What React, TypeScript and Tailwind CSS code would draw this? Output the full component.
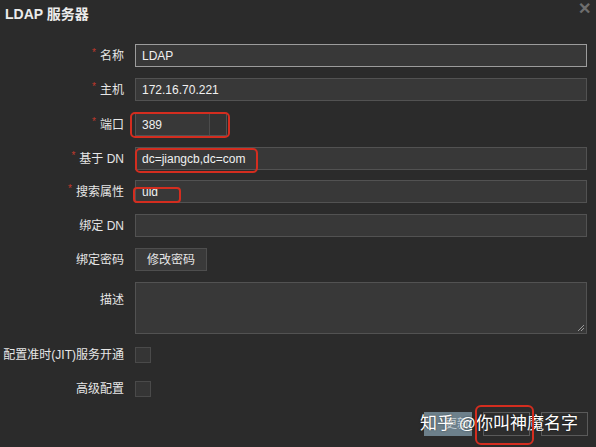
import React from "react";

const font = { fontFamily: '"Liberation Sans", Arial, "Noto Sans CJK SC", sans-serif' };

function Label({ text, required }: { text: string; required?: boolean }) {
  return (
    <div className="w-[124px] shrink-0 flex items-center justify-end text-[12px] text-[#e6e6e6]">
      {required && <span className="text-[#c0392b] text-[10px] mr-[4px] -mt-[6px]">*</span>}
      <span>{text}</span>
    </div>
  );
}

function Input({ value, focused }: { value?: string; focused?: boolean }) {
  return (
    <div
      className={`flex-1 mr-[9px] h-[23px] bg-[#383838] border ${
        focused ? "border-[#9c9c9c]" : "border-[#525252]"
      } flex items-center pl-[6px] text-[12px] text-[#f0f0f0]`}
    >
      {value}
    </div>
  );
}

function Row({ children }: { children: React.ReactNode }) {
  return <div className="flex h-[23px] gap-[11px]">{children}</div>;
}

export default function App() {
  return (
    <div className="relative w-[596px] h-[447px] bg-[#2b2b2b] overflow-hidden" style={font}>
      <div className="absolute right-[5px] top-[-3px] text-[#6e6e6e] text-[16px] font-bold">✕</div>
      <div className="pl-[5px] pt-[5px] h-[44px] text-[14px] font-bold text-[#ececec] leading-[18px]">
        LDAP 服务器
      </div>
      <div className="flex flex-col">
        <Row>
          <Label text="名称" required />
          <Input value="LDAP" focused />
        </Row>
        <div className="h-[11px]" />
        <Row>
          <Label text="主机" required />
          <Input value="172.16.70.221" />
        </Row>
        <div className="h-[12px]" />
        <Row>
          <Label text="端口" required />
          <div className="w-[92px] h-[23px] bg-[#383838] border border-[#525252] flex">
            <div className="w-[74px] border-r border-[#4c4c4c] flex items-center pl-[6px] text-[12px] text-[#f0f0f0]">
              389
            </div>
            <div className="flex-1 bg-[#333333]" />
          </div>
        </Row>
        <div className="h-[11px]" />
        <Row>
          <Label text="基于 DN" required />
          <Input value="dc=jiangcb,dc=com" />
        </Row>
        <div className="h-[10px]" />
        <Row>
          <Label text="搜索属性" required />
          <Input value="uid" />
        </Row>
        <div className="h-[11px]" />
        <Row>
          <Label text="绑定 DN" />
          <Input />
        </Row>
        <div className="h-[11px]" />
        <Row>
          <Label text="绑定密码" />
          <div className="w-[72px] h-[23px] bg-[#3a3a3a] border border-[#4e4e4e] flex items-center justify-center text-[12px] text-[#e6e6e6]">
            修改密码
          </div>
        </Row>
        <div className="h-[11px]" />
        <div className="flex gap-[11px] h-[52px]">
          <div className="w-[124px] shrink-0 flex justify-end pt-[9px] text-[12px] text-[#e6e6e6]">描述</div>
          <div className="relative flex-1 mr-[9px] bg-[#383838] border border-[#525252]">
            <svg className="absolute right-[1px] bottom-[1px]" width="9" height="9" viewBox="0 0 9 9">
              <path d="M8 2 L2 8 M8 5 L5 8" stroke="#9a9a9a" strokeWidth="1" />
            </svg>
          </div>
        </div>
        <div className="h-[13px]" />
        <div className="flex gap-[11px] h-[16px]">
          <div className="w-[124px] shrink-0 flex items-center justify-end text-[12px] text-[#e6e6e6] whitespace-nowrap">
            配置准时(JIT)服务开通
          </div>
          <div className="w-[16px] h-[16px] bg-[#353535] border border-[#4a4a4a]" />
        </div>
        <div className="h-[18px]" />
        <div className="flex gap-[11px] h-[16px]">
          <div className="w-[124px] shrink-0 flex items-center justify-end text-[12px] text-[#e6e6e6]">高级配置</div>
          <div className="w-[16px] h-[16px] bg-[#353535] border border-[#4a4a4a]" />
        </div>
      </div>

      <div className="absolute left-[424px] top-[412px] flex gap-[11px]">
        <div className="w-[48px] h-[24px] bg-[#6d808b] flex items-center justify-end pr-[3px] text-[12px] text-[#c5d0d6]">
          更新
        </div>
        <div className="w-[47px] h-[24px] border border-[#5a5a5a] bg-[#2e2e2e]" />
        <div className="w-[47px] h-[24px] border border-[#5a5a5a] bg-[#2e2e2e]" />
      </div>

      <div
        className="absolute left-[420px] top-[411px] text-[17px] text-white leading-[26px] whitespace-nowrap"
        style={{ textShadow: "0 0 2px rgba(0,0,0,0.6)" }}
      >
        知乎 @你叫神魔名字
      </div>

      <div className="absolute left-[130px] top-[112px] w-[100px] h-[26px] border-2 border-[#d42d1f] rounded-[5px]" />
      <div className="absolute left-[135px] top-[148px] w-[123px] h-[25px] border-2 border-[#d42d1f] rounded-[5px]" />
      <div className="absolute left-[133px] top-[187px] w-[48px] h-[16px] border-2 border-[#d42d1f] rounded-[4px]" />
      <div className="absolute left-[475px] top-[405px] w-[59px] h-[40px] border-2 border-[#d42d1f] rounded-[6px]" />
    </div>
  );
}
